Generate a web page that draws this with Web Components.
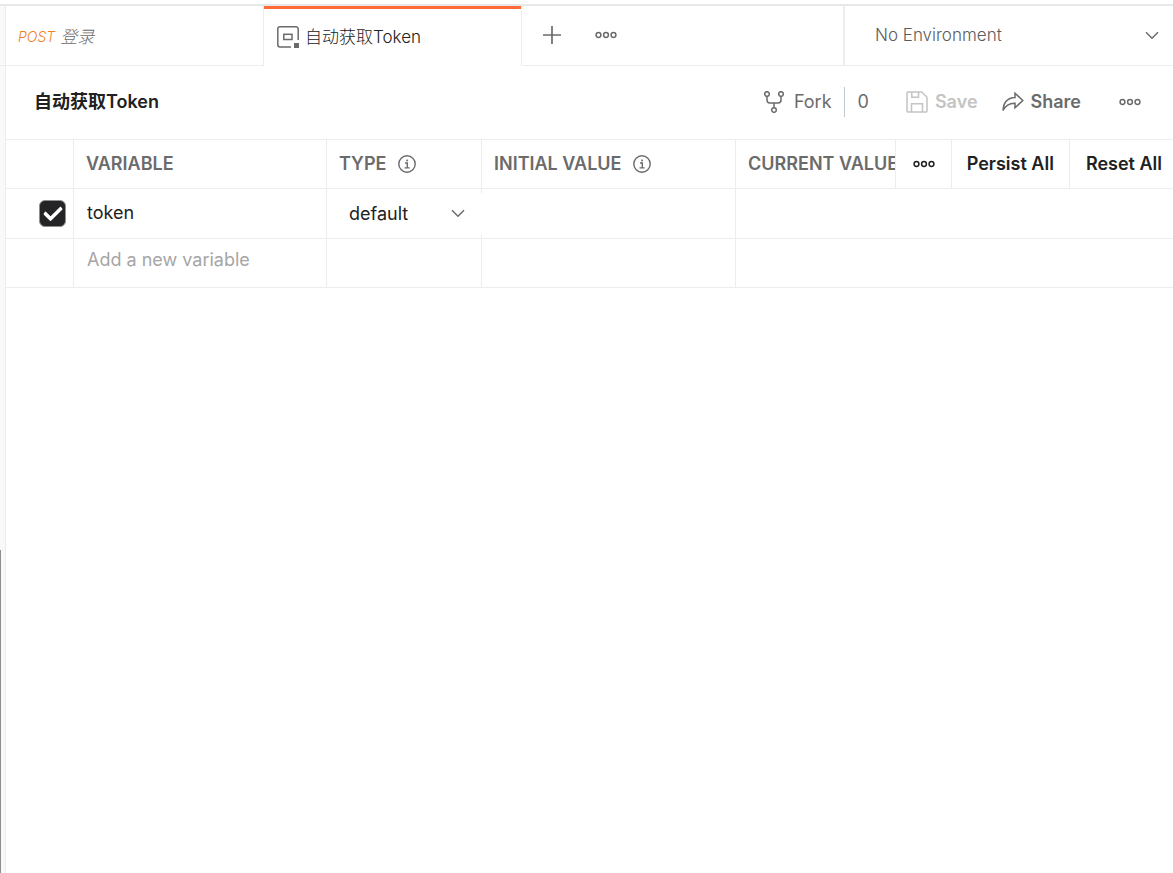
<!DOCTYPE html>
<html lang="zh-CN">
<head>
<meta charset="utf-8">
<meta name="viewport" content="width=device-width, initial-scale=1">
<title>自动获取Token</title>
<style>
  :root {
    --line: #ededed;
    --text: #212121;
    --muted: #6b6b6b;
    --faint: #c4c4c4;
    --accent: #ff6c37;
    --gutter: #f9f9f9;
  }

  body {
    margin: 0;
    background: #fff;
    color: var(--text);
    font: 18px/24px Inter, "Noto Sans CJK SC", sans-serif;
  }
</style>
</head>
<body>
<env-workspace>
  <tab-strip slot="tabs">
    <request-tab method="POST">登录</request-tab>
    <request-tab active>自动获取Token</request-tab>
    <env-picker slot="end"></env-picker>
  </tab-strip>
  <env-toolbar>自动获取Token</env-toolbar>
  <variable-table></variable-table>
</env-workspace>

<script>
/* Stroke icons, drawn in the current text colour */
const ICONS = {
  more: {
    w: 22, h: 8,
    body: '<g stroke-width="1.5"><circle cx="3.5" cy="4" r="2.4"/><circle cx="11" cy="4" r="2.4"/><circle cx="18.5" cy="4" r="2.4"/></g>'
  },
  plus: {
    w: 18, h: 18,
    body: '<path d="M9 0v18M0 9h18" stroke-width="1.7"/>'
  },
  chevron: {
    w: 14, h: 9,
    body: '<path d="M1 1.2l6 6 6-6" stroke-width="1.5"/>'
  },
  environment: {
    w: 22, h: 22,
    body: '<path d="M14 21H3A2.2 2.2 0 0 1 .8 18.8V3A2.2 2.2 0 0 1 3 .8h16A2.2 2.2 0 0 1 21.2 3v11" stroke-width="1.5"/>' +
          '<rect x="6.8" y="8.3" width="8.2" height="5.2" stroke-width="1.5"/>' +
          '<rect x="17" y="17" width="5" height="5" fill="currentColor" stroke="none"/>'
  },
  fork: {
    w: 20, h: 22,
    body: '<g stroke-width="1.5"><circle cx="3" cy="3" r="2.3"/><circle cx="17" cy="3" r="2.3"/><circle cx="10" cy="19" r="2.3"/>' +
          '<path d="M3 5.3V9a3 3 0 0 0 3 3h8a3 3 0 0 0 3-3V5.3M10 12v4.7"/></g>'
  },
  save: {
    w: 22, h: 22,
    body: '<g stroke-width="1.5"><path d="M1 2.2A1.2 1.2 0 0 1 2.2 1h13.6L21 6.2v13.6a1.2 1.2 0 0 1-1.2 1.2H2.2A1.2 1.2 0 0 1 1 19.8z"/>' +
          '<path d="M5.8 1v5.2h6.7V1M5.5 21v-8.2h11V21"/></g>'
  },
  share: {
    w: 22, h: 20,
    body: '<path d="M13 1.2l7.8 7.3-7.8 7.3v-4.6C7.5 11 3.500 13.500 1 18.500 1.500 10.500 5.500 5.800 13 5.500z" stroke-width="1.5"/>'
  },
  info: {
    w: 18, h: 18,
    body: '<circle cx="9" cy="9" r="8.2" stroke-width="1.4"/><path d="M7 8h2.3v4.7M6.5 12.900h5.200" stroke-width="1.4"/>' +
          '<rect x="8.2" y="4.6" width="1.7" height="1.7" fill="currentColor" stroke="none"/>'
  }
};

class EnvIcon extends HTMLElement {
  connectedCallback() {
    const icon = ICONS[this.getAttribute('name')];
    this.attachShadow({ mode: 'open' }).innerHTML = `
      <style>
        :host { display: inline-flex; flex: none; }
        svg { display: block; fill: none; stroke: currentColor; }
      </style>
      <svg width="${icon.w}" height="${icon.h}" viewBox="0 0 ${icon.w} ${icon.h}" aria-hidden="true">${icon.body}</svg>
    `;
  }
}
customElements.define('env-icon', EnvIcon);

/**
 * Page frame: sidebar edge on the left, tabs and content on the right
 */
class EnvWorkspace extends HTMLElement {
  constructor() {
    super();
    this.attachShadow({ mode: 'open' }).innerHTML = `
      <style>
        :host {
          display: grid;
          grid-template-columns: 5px minmax(0, 1fr);
          grid-template-rows: auto 1fr;
          min-height: 100vh;
          box-sizing: border-box;
          padding-top: 4px;
        }
        .edge-top, .tabs { border-top: 2px solid #e8e8e8; }
        .edge-top { background: var(--gutter); border-bottom: 1px solid var(--line); }
        .edge {
          display: flex;
          flex-direction: column;
          background: var(--gutter);
        }
        .edge::before { content: ""; flex: 3; }
        .thumb { flex: 2; width: 1px; background: #8f8f8f; }
        .tabs, main { border-left: 1px solid var(--line); min-width: 0; }
      </style>
      <div class="edge-top"></div>
      <div class="tabs"><slot name="tabs"></slot></div>
      <div class="edge"><div class="thumb"></div></div>
      <main><slot></slot></main>
    `;
  }
}
customElements.define('env-workspace', EnvWorkspace);

class TabStrip extends HTMLElement {
  constructor() {
    super();
    this.attachShadow({ mode: 'open' }).innerHTML = `
      <style>
        :host { display: flex; height: 60px; }
        .actions {
          flex: 1;
          display: flex;
          align-items: center;
          gap: 34px;
          padding: 0 21px 2px;
          border-bottom: 1px solid var(--line);
        }
        button {
          display: flex;
          padding: 0;
          border: 0;
          background: none;
          color: var(--muted);
        }
      </style>
      <slot></slot>
      <div class="actions">
        <button type="button" aria-label="New tab"><env-icon name="plus"></env-icon></button>
        <button type="button" aria-label="Tab options"><env-icon name="more"></env-icon></button>
      </div>
      <slot name="end"></slot>
    `;
  }
}
customElements.define('tab-strip', TabStrip);

class RequestTab extends HTMLElement {
  connectedCallback() {
    const method = this.getAttribute('method');
    this.attachShadow({ mode: 'open' }).innerHTML = `
      <style>
        :host {
          display: flex;
          flex: 0 1 258px;
          box-sizing: border-box;
          border-right: 1px solid var(--line);
          border-bottom: 1px solid var(--line);
        }
        :host([active]) {
          border-bottom-color: transparent;
          box-shadow: inset 0 3px var(--accent);
        }
        button {
          flex: 1;
          display: flex;
          align-items: center;
          gap: 5px;
          padding: 3px 12px 0;
          border: 0;
          background: none;
          color: var(--muted);
          font: inherit;
          font-size: 17px;
          font-weight: 300;
          font-style: italic;
          white-space: nowrap;
        }
        :host([active]) button { gap: 6px; padding-left: 13px; font-style: normal; }
        :host([active]) .name { color: var(--text); }
        .method { color: #f0821e; font-size: 14px; }
      </style>
      <button type="button">
        ${method ? `<span class="method">${method}</span>` : '<env-icon name="environment"></env-icon>'}
        <span class="name"><slot></slot></span>
      </button>
    `;
  }
}
customElements.define('request-tab', RequestTab);

class EnvPicker extends HTMLElement {
  constructor() {
    super();
    this.attachShadow({ mode: 'open' }).innerHTML = `
      <style>
        :host {
          display: grid;
          align-items: center;
          flex: 0 1 330px;
          box-sizing: border-box;
          border-left: 2px solid var(--line);
          border-bottom: 1px solid var(--line);
          color: var(--muted);
        }
        select, env-icon { grid-area: 1 / 1; }
        select {
          appearance: none;
          height: 100%;
          padding: 0 40px 2px 30px;
          border: 0;
          background: none;
          color: #5c5c5c;
          font: inherit;
          font-size: 17px;
          font-weight: 300;
        }
        env-icon { justify-self: end; margin-right: 14px; pointer-events: none; }
      </style>
      <select aria-label="Environment"><option>No Environment</option></select>
      <env-icon name="chevron"></env-icon>
    `;
  }
}
customElements.define('env-picker', EnvPicker);

class EnvToolbar extends HTMLElement {
  constructor() {
    super();
    this.attachShadow({ mode: 'open' }).innerHTML = `
      <style>
        :host {
          display: flex;
          align-items: center;
          justify-content: space-between;
          height: 71px;
          padding: 0 32px 2px 28px;
          border-bottom: 1px solid var(--line);
        }
        h1 { margin: 0; font-size: 18px; line-height: 24px; font-weight: 600; }
        .actions { display: flex; align-items: center; color: var(--muted); }
        button {
          display: flex;
          align-items: center;
          gap: 7px;
          padding: 0;
          border: 0;
          background: none;
          color: inherit;
          font: inherit;
          font-weight: 600;
        }
        .fork { gap: 10px; padding-right: 12px; font-weight: 400; }
        .count {
          padding: 3px 0 3px 13px;
          border-left: 1px solid #c3c9d1;
          font-weight: 400;
        }
        .save { margin: 0 24px 0 37px; color: var(--faint); }
        .more { margin-left: 38px; }
      </style>
      <h1><slot></slot></h1>
      <div class="actions">
        <button type="button" class="fork"><env-icon name="fork"></env-icon>Fork</button>
        <button type="button" class="count" aria-label="Forks">0</button>
        <button type="button" class="save" disabled><env-icon name="save"></env-icon>Save</button>
        <button type="button" class="share"><env-icon name="share"></env-icon>Share</button>
        <button type="button" class="more" aria-label="More actions"><env-icon name="more"></env-icon></button>
      </div>
    `;
  }
}
customElements.define('env-toolbar', EnvToolbar);

class VariableTable extends HTMLElement {
  constructor() {
    super();
    this.attachShadow({ mode: 'open' }).innerHTML = `
      <style>
        :host { display: block; }
        table {
          width: 100%;
          table-layout: fixed;
          border-spacing: 0;
        }
        .c-check { width: 68px; }
        .c-name { width: 253px; }
        .c-type { width: 155px; }
        .c-initial { width: 254px; }
        th, td {
          box-sizing: border-box;
          height: 49px;
          padding: 0;
          border-right: 1px solid var(--line);
          border-bottom: 1px solid var(--line);
          text-align: left;
        }
        tbody tr:first-child td { height: 50px; }
        th:last-child, td:last-child { border-right: 0; }
        th { color: var(--muted); font-weight: 600; }
        .head { display: flex; align-items: center; gap: 12px; padding-left: 12px; }
        .current { gap: 0; }
        .label { flex: 1; min-width: 0; overflow: hidden; white-space: nowrap; }
        .head button {
          display: flex;
          align-items: center;
          flex: none;
          height: 48px;
          padding: 0 15px;
          border: 0;
          border-left: 1px solid var(--line);
          background: none;
          color: var(--text);
          font: inherit;
          white-space: nowrap;
        }
        .head .more { padding: 0 16px 0 17px; }
        .head .reset { padding: 0 11px 0 16px; }

        input[type="checkbox"] {
          appearance: none;
          display: grid;
          place-items: center;
          width: 27px;
          height: 27px;
          margin: 0 0 0 33px;
          border: 1px solid #8e8e8e;
          border-radius: 6px;
        }
        input[type="checkbox"]:checked { background: #242426; }
        input[type="checkbox"]:checked::before {
          content: "";
          box-sizing: border-box;
          width: 18px;
          height: 11px;
          margin-bottom: 5px;
          border: solid #fff;
          border-width: 0 0 4px 4px;
          border-radius: 2px;
          transform: rotate(-45deg);
        }
        input[type="text"] {
          display: block;
          box-sizing: border-box;
          width: 100%;
          height: 42px;
          padding: 0 13px 2px;
          border: 0;
          background: none;
          color: var(--text);
          font: inherit;
        }
        input::placeholder { color: #a6a6a6; opacity: 1; }
        .new td { vertical-align: top; }
        .type {
          display: grid;
          align-items: center;
          position: relative;
          height: 42px;
          margin-right: -1px;
          background: #fff;
        }
        .type > * { grid-area: 1 / 1; }
        select {
          appearance: none;
          height: 100%;
          padding: 0 36px 0 22px;
          border: 0;
          background: none;
          color: var(--text);
          font: inherit;
        }
        .type env-icon {
          justify-self: end;
          margin-right: 17px;
          color: var(--muted);
          pointer-events: none;
        }
      </style>
      <table>
        <colgroup>
          <col class="c-check"><col class="c-name"><col class="c-type"><col class="c-initial"><col>
        </colgroup>
        <thead>
          <tr>
            <th></th>
            <th><div class="head">VARIABLE</div></th>
            <th><div class="head">TYPE <env-icon name="info"></env-icon></div></th>
            <th><div class="head">INITIAL VALUE <env-icon name="info"></env-icon></div></th>
            <th>
              <div class="head current">
                <span class="label">CURRENT VALUE</span>
                <button type="button" class="more" aria-label="Table options"><env-icon name="more"></env-icon></button>
                <button type="button">Persist All</button>
                <button type="button" class="reset">Reset All</button>
              </div>
            </th>
          </tr>
        </thead>
        <tbody>
          <tr>
            <td><input type="checkbox" checked aria-label="Enable token"></td>
            <td><input type="text" value="token" aria-label="Variable"></td>
            <td>
              <div class="type">
                <select aria-label="Type"><option>default</option><option>secret</option></select>
                <env-icon name="chevron"></env-icon>
              </div>
            </td>
            <td><input type="text" aria-label="Initial value"></td>
            <td><input type="text" aria-label="Current value"></td>
          </tr>
          <tr class="new">
            <td></td>
            <td><input type="text" placeholder="Add a new variable" aria-label="New variable"></td>
            <td></td>
            <td></td>
            <td></td>
          </tr>
        </tbody>
      </table>
    `;
  }
}
customElements.define('variable-table', VariableTable);
</script>
</body>
</html>
